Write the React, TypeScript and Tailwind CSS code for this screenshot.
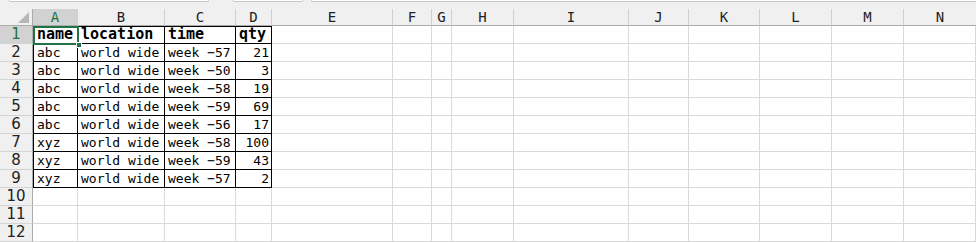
import React from "react";

const COLS = [
  { name: "A", w: 45 },
  { name: "B", w: 87 },
  { name: "C", w: 71 },
  { name: "D", w: 36 },
  { name: "E", w: 121 },
  { name: "F", w: 39 },
  { name: "G", w: 20 },
  { name: "H", w: 62 },
  { name: "I", w: 115 },
  { name: "J", w: 60 },
  { name: "K", w: 71 },
  { name: "L", w: 72 },
  { name: "M", w: 72 },
  { name: "N", w: 72 },
];

const DATA: (string | number)[][] = [
  ["name", "location", "time", "qty"],
  ["abc", "world wide", "week −57", 21],
  ["abc", "world wide", "week −50", 3],
  ["abc", "world wide", "week −58", 19],
  ["abc", "world wide", "week −59", 69],
  ["abc", "world wide", "week −56", 17],
  ["xyz", "world wide", "week −58", 100],
  ["xyz", "world wide", "week −59", 43],
  ["xyz", "world wide", "week −57", 2],
];

const gridCols = "grid-cols-[33px_45px_87px_71px_36px_121px_39px_20px_62px_115px_60px_71px_72px_72px_72px]";

const App = () => {
  const rows = Array.from({ length: 12 }, (_, i) => i + 1);

  return (
    <div className="w-[976px] h-[242px] overflow-hidden bg-white relative font-['DejaVu_Sans_Mono',monospace]">
      {/* formula bar remnants */}
      <div className="h-[9px] bg-[#f0f0f0] flex items-start">
        <div className="ml-[9px] w-[200px] h-[2px] bg-white border-b border-x border-[#c6c6c6] rounded-b-[3px]" />
        <div className="ml-[24px] w-[70px] h-[2px] bg-white border-b border-x border-[#c6c6c6] rounded-b-[3px]" />
        <div className="ml-[8px] flex-1 h-[2px] bg-white border-b border-l border-[#c6c6c6] rounded-bl-[3px]" />
      </div>

      <div className={`grid ${gridCols}`}>
        {/* corner */}
        <div className="h-[17px] bg-[#f0f0f0] border-b border-r border-[#ababab] relative">
          <div className="absolute right-[3px] bottom-[2px] w-0 h-0 border-l-[11px] border-l-transparent border-b-[11px] border-b-[#b7b7b7]" />
        </div>
        {COLS.map((c, i) => (
          <div
            key={c.name}
            className={`h-[17px] flex items-end justify-center pb-[1px] text-[14px] leading-none border-b border-[#ababab] ${
              i === 0 ? "bg-[#d2d2d2] text-[#217346]" : "bg-[#f0f0f0] text-[#222]"
            } ${i === COLS.length - 1 ? "" : "border-r border-r-[#d0d0d0]"}`}
          >
            {c.name}
          </div>
        ))}

        {rows.map((r) => {
          const data = DATA[r - 1];
          return (
            <React.Fragment key={r}>
              <div
                className={`h-[18px] flex items-end justify-center pb-[1px] text-[15px] leading-none font-['DejaVu_Sans',sans-serif] border-r border-[#ababab] border-b border-b-[#d4d4d4] ${
                  r === 1 ? "bg-[#d2d2d2] text-[#217346]" : "bg-[#f0f0f0] text-[#222]"
                }`}
              >
                {r}
              </div>
              {COLS.map((c, ci) => {
                const inTable = data && ci < 4;
                const val = inTable ? data[ci] : "";
                const isNum = typeof val === "number";
                const head = r === 1 && inTable;
                return (
                  <div
                    key={c.name}
                    className={`h-[18px] flex items-end whitespace-nowrap overflow-visible leading-none ${
                      inTable
                        ? `border-r border-b border-black ${r === 1 ? "border-t" : ""} ${
                            ci === 0 ? "border-l" : ""
                          }`
                        : "border-r border-b border-[#d9d9d9]"
                    } ${isNum ? "justify-end pr-[2px]" : "pl-[3px]"} ${
                      head ? "font-bold text-[15px] pb-[1px]" : "text-[13px] pb-[2px]"
                    } text-black`}
                  >
                    {val}
                  </div>
                );
              })}
            </React.Fragment>
          );
        })}
      </div>

      {/* active cell A1 */}
      <div className="absolute left-[33px] top-[26px] w-[46px] h-[19px] border-2 border-[#217346] pointer-events-none" />
      <div className="absolute left-[76px] top-[42px] w-[6px] h-[6px] bg-[#217346] border border-white pointer-events-none" />
    </div>
  );
};

export default App;
